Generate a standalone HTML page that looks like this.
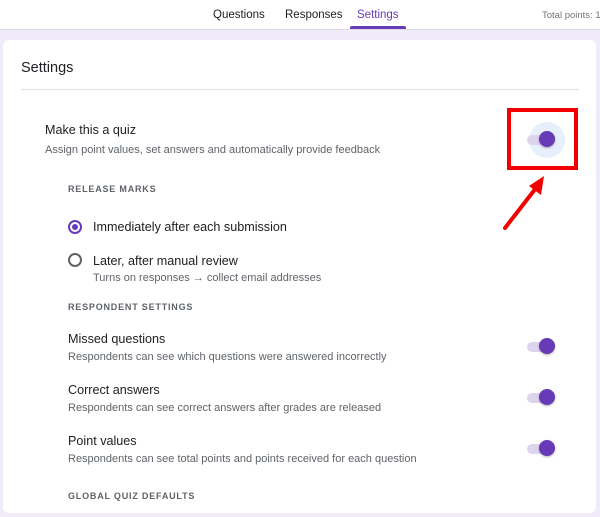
<!DOCTYPE html>
<html><head><style>
*{margin:0;padding:0;box-sizing:border-box}
body{width:600px;height:517px;background:#f0ebf8;font-family:"Liberation Sans",Arial,sans-serif;position:relative;overflow:hidden}
.top{position:absolute;left:0;top:0;width:600px;height:30px;background:#fff;border-bottom:1px solid #e0dae8}
.t{position:absolute;white-space:nowrap}
.card{position:absolute;left:3px;top:40px;width:593px;height:473px;background:#fff;border-radius:6px}
.h{font-size:12.6px;color:#202124}
.s{font-size:11px;color:#5f6368}
.c{font-size:9px;color:#5f6368;font-weight:bold;letter-spacing:0.8px}
.tog{position:absolute;width:26px;height:10px;border-radius:5px;background:#ddd4ee}
.tog:after{content:"";position:absolute;right:-2px;top:-4px;width:16px;height:16px;border-radius:50%;background:#673ab7;box-shadow:0 1px 2px rgba(0,0,0,.3)}
</style></head><body>
<div class="top">
<div class="t" style="left:213px;top:9px;font-size:11.5px;color:#202124">Questions</div>
<div class="t" style="left:285px;top:9px;font-size:11.5px;color:#202124">Responses</div>
<div class="t" style="left:357px;top:9px;font-size:11.5px;color:#673ab7">Settings</div>
<div style="position:absolute;left:350px;top:26px;width:56px;height:3px;background:#673ab7;border-radius:2px 2px 0 0"></div>
<div class="t" style="left:542px;top:10px;font-size:9.5px;color:#70757a">Total points: 1</div>
</div>
<div class="card"></div>
<div class="t" style="left:21px;top:60px;font-size:14.5px;color:#202124">Settings</div>
<div style="position:absolute;left:21px;top:89px;width:558px;height:1px;background:#e0e0e0"></div>
<div class="t h" style="left:45px;top:123px">Make this a quiz</div>
<div class="t s" style="left:45px;top:144px">Assign point values, set answers and automatically provide feedback</div>
<div style="position:absolute;left:529px;top:122px;width:36px;height:36px;border-radius:50%;background:#e8effc"></div>
<div class="tog" style="left:527px;top:135px"></div>
<div style="position:absolute;left:507px;top:108px;width:71px;height:62px;border:4px solid #f20000"></div>
<svg style="position:absolute;left:0;top:0" width="600" height="517"><line x1="505" y1="228" x2="536" y2="188" stroke="#f20000" stroke-width="4" stroke-linecap="round"/><polygon points="544,176 529,186 541,195" fill="#f20000"/></svg>
<div class="t c" style="left:68px;top:184px">RELEASE MARKS</div>
<div style="position:absolute;left:68px;top:220px;width:14px;height:14px;border:2px solid #673ab7;border-radius:50%"></div>
<div style="position:absolute;left:72px;top:224px;width:6px;height:6px;background:#673ab7;border-radius:50%"></div>
<div class="t h" style="left:93px;top:220px">Immediately after each submission</div>
<div style="position:absolute;left:68px;top:253px;width:14px;height:14px;border:2px solid #5f6368;border-radius:50%"></div>
<div class="t h" style="left:93px;top:254px">Later, after manual review</div>
<div class="t s" style="left:93px;top:272px">Turns on responses → collect email addresses</div>
<div class="t c" style="left:68px;top:302px">RESPONDENT SETTINGS</div>
<div class="t h" style="left:68px;top:332px">Missed questions</div>
<div class="t s" style="left:68px;top:351px">Respondents can see which questions were answered incorrectly</div>
<div class="tog" style="left:527px;top:342px"></div>
<div class="t h" style="left:68px;top:383px">Correct answers</div>
<div class="t s" style="left:68px;top:402px">Respondents can see correct answers after grades are released</div>
<div class="tog" style="left:527px;top:393px"></div>
<div class="t h" style="left:68px;top:434px">Point values</div>
<div class="t s" style="left:68px;top:453px">Respondents can see total points and points received for each question</div>
<div class="tog" style="left:527px;top:444px"></div>
<div class="t c" style="left:68px;top:491px">GLOBAL QUIZ DEFAULTS</div>
</body></html>
